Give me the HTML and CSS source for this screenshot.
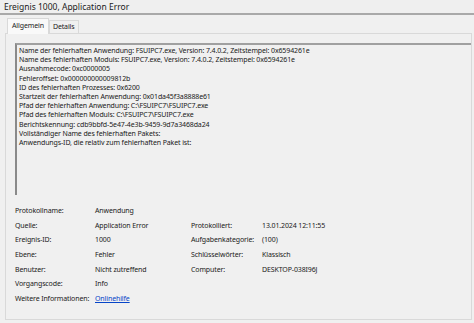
FILE: index.html
```html
<!DOCTYPE html>
<html lang="de">
<head>
  <meta charset="UTF-8" />
  <title>Ereignis 1000, Application Error</title>
  <link rel="stylesheet" href="styles.css">
</head>
<body>

  <div class="titlebar">Ereignis 1000, Application Error</div>

  <div class="window">
    <!-- Tabs -->
    <div class="tabs">
      <div class="tab active">Allgemein</div>
      <div class="tab">Details</div>
    </div>

    <div class="panel">
      <div class="message">
        <p>Name der fehlerhaften Anwendung: FSUIPC7.exe, Version: 7.4.0.2, Zeitstempel: 0x6594261e</p>
        <p>Name des fehlerhaften Moduls: FSUIPC7.exe, Version: 7.4.0.2, Zeitstempel: 0x6594261e</p>
        <p>Ausnahmecode: 0xc0000005</p>
        <p>Fehleroffset: 0x000000000009812b</p>
        <p>ID des fehlerhaften Prozesses: 0x6200</p>
        <p>Startzeit der fehlerhaften Anwendung: 0x01da45f3a8888e61</p>
        <p>Pfad der fehlerhaften Anwendung: C:\FSUIPC7\FSUIPC7.exe</p>
        <p>Pfad des fehlerhaften Moduls: C:\FSUIPC7\FSUIPC7.exe</p>
        <p>Berichtskennung: cdb9bbfd-5e47-4e3b-9459-9d7a3468da24</p>
        <p>Vollständiger Name des fehlerhaften Pakets:</p>
        <p>Anwendungs-ID, die relativ zum fehlerhaften Paket ist:</p>
      </div>

      <!-- Properties -->
      <div class="props">
        <span class="label">Protokollname:</span><span>Anwendung</span><span></span><span></span>
        <span class="label">Quelle:</span><span>Application Error</span><span class="label">Protokolliert:</span><span>13.01.2024 12:11:55</span>
        <span class="label">Ereignis-ID:</span><span>1000</span><span class="label">Aufgabenkategorie:</span><span>(100)</span>
        <span class="label">Ebene:</span><span>Fehler</span><span class="label">Schlüsselwörter:</span><span>Klassisch</span>
        <span class="label">Benutzer:</span><span>Nicht zutreffend</span><span class="label">Computer:</span><span>DESKTOP-038I96J</span>
        <span class="label">Vorgangscode:</span><span>Info</span><span></span><span></span>
        <span class="label">Weitere Informationen:</span><span><a href="#">Onlinehilfe</a></span><span></span><span></span>
      </div>
    </div>
  </div>

</body>
</html>
```

FILE: styles.css
```css
* { box-sizing: border-box; }
body {
  margin: 0;
  background: #f0f0f0;
  font-family: 'Noto Sans', 'Open Sans', sans-serif;
  font-size: 7px;
  letter-spacing: -0.12px;
  color: #1a1a1a;
  width: 474px;
  height: 323px;
  overflow: hidden;
}

.titlebar {
  height: 15px;
  padding: 1px 4px 0;
  font-size: 8.5px;
  letter-spacing: 0;
  line-height: 12px;
  border-bottom: 2px solid #a9a9a9;
  background: #efefef;
}

.window {
  padding: 3px 2px 0 5px;
}

/* Tabs */
.tabs {
  display: flex;
  padding-left: 2px;
  height: 15px;
  align-items: flex-end;
}
.tab {
  padding: 0 3px;
  height: 13px;
  line-height: 12px;
  font-size: 7px;
  border: 1px solid #d9d9d9;
  border-bottom: none;
  background: #f0f0f0;
}
.tab.active {
  height: 16px;
  padding: 0 4px;
  line-height: 14px;
  background: #f9f9f9;
  position: relative;
  top: 1px;
}

.panel {
  border: 1px solid #d9d9d9;
  height: 287px;
  padding: 9px 0 0 9px;
  overflow: hidden;
}

/* Message box */
.message {
  margin-right: -20px;
  height: 152px;
  border-top: 2px solid #a0a0a0;
  border-left: 2px solid #8a8a8a;
  padding: 1px 2px;
}
.message p {
  margin: 0;
  line-height: 9.2px;
  white-space: nowrap;
}

/* Properties grid */
.props {
  display: grid;
  grid-template-columns: 80px 96px 71px auto;
  grid-auto-rows: 14.7px;
  align-items: center;
  margin-top: 8px;
  white-space: nowrap;
}
.props a {
  color: #0645c8;
  text-decoration: underline;
}
```
